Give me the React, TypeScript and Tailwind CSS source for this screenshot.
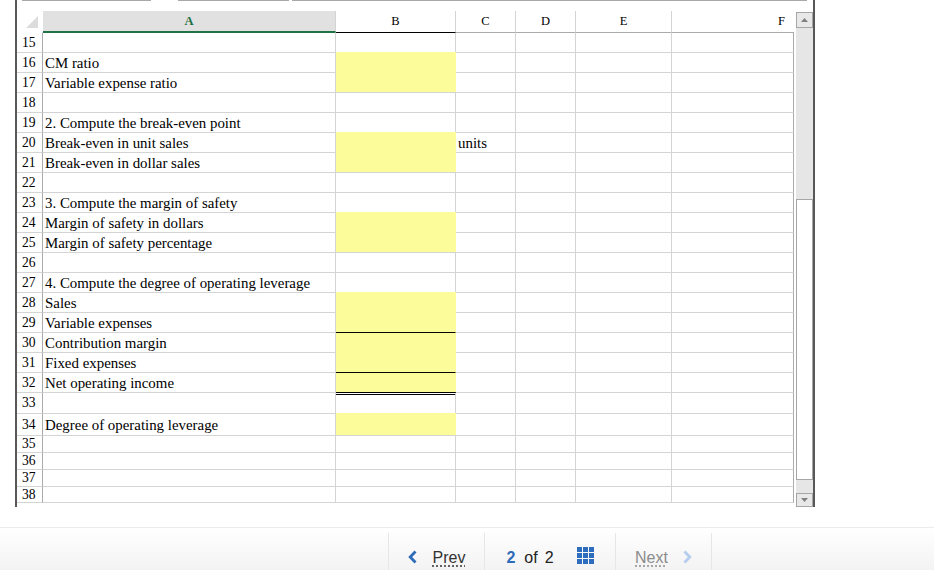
import React from 'react';

type Row = {
  n: number;
  a?: string;
  c?: string;
  y?: boolean;
  h: string;
  bTop?: 'black' | 'double';
};

const rows: Row[] = [
  { n: 15, h: 'h-[20px]', bTop: 'black' },
  { n: 16, a: 'CM ratio', y: true, h: 'h-[20px]' },
  { n: 17, a: 'Variable expense ratio', y: true, h: 'h-[20px]' },
  { n: 18, h: 'h-[20px]' },
  { n: 19, a: '2. Compute the break-even point', h: 'h-[20px]' },
  { n: 20, a: 'Break-even in unit sales', y: true, c: 'units', h: 'h-[20px]' },
  { n: 21, a: 'Break-even in dollar sales', y: true, h: 'h-[20px]' },
  { n: 22, h: 'h-[20px]' },
  { n: 23, a: '3. Compute the margin of safety', h: 'h-[20px]' },
  { n: 24, a: 'Margin of safety in dollars', y: true, h: 'h-[20px]' },
  { n: 25, a: 'Margin of safety percentage', y: true, h: 'h-[20px]' },
  { n: 26, h: 'h-[20px]' },
  { n: 27, a: '4. Compute the degree of operating leverage', h: 'h-[20px]' },
  { n: 28, a: 'Sales', y: true, h: 'h-[20px]' },
  { n: 29, a: 'Variable expenses', y: true, h: 'h-[20px]' },
  { n: 30, a: 'Contribution margin', y: true, h: 'h-[20px]', bTop: 'black' },
  { n: 31, a: 'Fixed expenses', y: true, h: 'h-[20px]' },
  { n: 32, a: 'Net operating income', y: true, h: 'h-[20px]', bTop: 'black' },
  { n: 33, h: 'h-[21px]', bTop: 'double' },
  { n: 34, a: 'Degree of operating leverage', y: true, h: 'h-[22px]' },
  { n: 35, h: 'h-[17px]' },
  { n: 36, h: 'h-[17px]' },
  { n: 37, h: 'h-[17px]' },
  { n: 38, h: 'h-[17px]' },
];

function bClass(r: Row): string {
  let top = 'border-t border-t-[#d4d4d4]';
  if (r.bTop === 'black') top = 'border-t border-t-black';
  else if (r.bTop === 'double') top = 'border-t-[3px] border-double border-t-black';
  else if (r.y) top = 'border-t border-t-[#fcfc9a]';
  const right = r.y ? 'border-r border-r-[#fcfc9a] bg-[#fcfc9a]' : 'border-r border-r-[#d4d4d4]';
  return `${top} ${right}`;
}

function SheetRow({ r }: { r: Row }) {
  const first = r.n === 15;
  const last = r.n === 38;
  const gridTop = first ? 'border-t border-t-[#ababab]' : 'border-t border-t-[#d4d4d4]';
  const bottom = last ? 'border-b border-b-[#d4d4d4]' : '';
  return (
    <div className={`flex ${r.h} box-content`}>
      <div
        className={`w-[26px] shrink-0 border-r border-r-[#ababab] ${first ? 'border-t border-t-white' : 'border-t border-t-[#d4d4d4]'} ${bottom} pl-[5px] flex items-center text-[13.6px] leading-none text-black`}
      >
        {r.n}
      </div>
      <div
        className={`w-[293px] shrink-0 border-r border-r-[#d4d4d4] ${first ? 'border-t border-t-[#217346]' : 'border-t border-t-[#d4d4d4]'} ${bottom} pl-[2px] pt-[2px] flex items-center text-[14.9px] leading-none whitespace-nowrap text-black`}
      >
        {r.a}
      </div>
      <div className={`w-[120px] shrink-0 ${bClass(r)} ${bottom}`} />
      <div
        className={`w-[60px] shrink-0 border-r border-r-[#d4d4d4] ${gridTop} ${bottom} pl-[2px] pt-[2px] flex items-center text-[14.9px] leading-none whitespace-nowrap text-black`}
      >
        {r.c}
      </div>
      <div className={`w-[60px] shrink-0 border-r border-r-[#d4d4d4] ${gridTop} ${bottom}`} />
      <div className={`w-[96px] shrink-0 border-r border-r-[#d4d4d4] ${gridTop} ${bottom}`} />
      <div className={`w-[122px] shrink-0 border-r border-r-[#ababab] ${gridTop} ${bottom}`} />
    </div>
  );
}

function Chevron({ dir, color }: { dir: 'l' | 'r'; color: string }) {
  return (
    <svg width="9" height="14" viewBox="0 0 9 14" className="shrink-0">
      <polyline
        points={dir === 'l' ? '7.5,1.5 2.2,7 7.5,12.5' : '1.5,1.5 6.8,7 1.5,12.5'}
        fill="none"
        stroke={color}
        strokeWidth="2.8"
      />
    </svg>
  );
}

function GridIcon() {
  return (
    <div className="grid grid-cols-3 gap-[1px] w-[17px] h-[17px] shrink-0">
      {Array.from({ length: 9 }).map((_, i) => (
        <div key={i} className="w-[5px] h-[5px] bg-[#2e6dbd]" />
      ))}
    </div>
  );
}

export default function App() {
  return (
    <div className="w-[934px] h-[570px] bg-white overflow-hidden font-['Liberation_Serif','Times_New_Roman',serif]">
      {/* main spreadsheet area */}
      <div className="flex h-[507px]">
        <div className="w-[15px] shrink-0" />
        <div className="w-[2px] shrink-0 bg-[#585858]" />
        <div className="flex flex-col w-[796px] shrink-0">
          {/* tab edges */}
          <div className="flex h-[1px] pl-[5px]">
            <div className="w-[129px] bg-[#a8a8a8]" />
            <div className="w-[27px]" />
            <div className="w-[111px] bg-[#a8a8a8]" />
            <div className="w-[3px]" />
            <div className="w-[515px] bg-[#a8a8a8]" />
          </div>
          <div className="flex flex-1">
            {/* grid */}
            <div className="w-[777px] shrink-0 pt-[10px] flex flex-col">
              <div className="flex h-[21px]">
                <div className="w-[26px] shrink-0 flex items-end justify-end pr-[5px] pb-[4px]">
                  <svg width="12" height="12" viewBox="0 0 12 12">
                    <polygon points="12,0 12,12 0,12" fill="#dcdcdc" />
                  </svg>
                </div>
                <div className="w-[293px] shrink-0 bg-[#e1e1e1] border-r border-r-[#d4d4d4] border-b border-b-[#217346] flex items-center justify-center text-[12.5px] font-bold text-[#1d7044]">
                  A
                </div>
                <div className="w-[120px] shrink-0 border-r border-r-[#d4d4d4] flex items-center justify-center text-[12.5px] text-black">
                  B
                </div>
                <div className="w-[60px] shrink-0 border-r border-r-[#d4d4d4] flex items-center justify-center text-[12.5px] text-black">
                  C
                </div>
                <div className="w-[60px] shrink-0 border-r border-r-[#d4d4d4] flex items-center justify-center text-[12.5px] text-black">
                  D
                </div>
                <div className="w-[96px] shrink-0 border-r border-r-[#d4d4d4] flex items-center justify-center text-[12.5px] text-black">
                  E
                </div>
                <div className="w-[122px] shrink-0 flex items-center justify-end pr-[9px] text-[12.5px] text-black">
                  F
                </div>
              </div>
              {rows.map((r) => (
                <SheetRow key={r.n} r={r} />
              ))}
            </div>
            <div className="w-[2px] shrink-0" />
            {/* scrollbar */}
            <div className="w-[17px] shrink-0 mt-[11px] flex flex-col">
              <div className="h-[16px] border border-[#a6a6a6] bg-[#e8e8e8] flex items-center justify-center">
                <svg width="7" height="4" viewBox="0 0 7 4">
                  <polygon points="3.5,0 7,4 0,4" fill="#808080" />
                </svg>
              </div>
              <div className="flex-1 bg-[#e6e6e6] flex flex-col">
                <div className="h-[171px]" />
                <div className="h-[281px] bg-white border border-[#a6a6a6]" />
              </div>
              <div className="h-[14px] border border-[#a6a6a6] bg-[#e8e8e8] flex items-center justify-center">
                <svg width="7" height="4" viewBox="0 0 7 4">
                  <polygon points="0,0 7,0 3.5,4" fill="#808080" />
                </svg>
              </div>
            </div>
          </div>
        </div>
        <div className="w-[2px] shrink-0 bg-[#585858]" />
      </div>

      {/* footer navigation */}
      <div className="h-[20px]" />
      <div className="h-[43px] border-t border-t-[#ececec] bg-gradient-to-b from-white to-[#f3f3f3] font-['Liberation_Sans',Arial,sans-serif]">
        <div className="flex ml-[388px] mt-[5px] h-[38px] text-[16px] leading-[20px]">
          <div className="w-[96px] border-l border-l-[#e6e6e6] pt-[15px] flex justify-center gap-[16px]">
            <div className="pt-[2px]">
              <Chevron dir="l" color="#2e6bb8" />
            </div>
            <span className="text-[#333] underline decoration-dotted underline-offset-[3px]">Prev</span>
          </div>
          <div className="w-[131px] border-l border-l-[#e6e6e6] pt-[15px] flex justify-center">
            <span className="font-bold text-[#2e6bb8]">2</span>
            <span className="ml-[9px] text-[#222]">of</span>
            <span className="ml-[7px] text-[#222]">2</span>
            <div className="ml-[23px] -mt-[1px]">
              <GridIcon />
            </div>
          </div>
          <div className="w-[97px] border-l border-r border-[#e6e6e6] pt-[15px] flex justify-center gap-[15px]">
            <span className="text-[#8c8c8c] underline decoration-dotted underline-offset-[3px]">Next</span>
            <div className="pt-[2px]">
              <Chevron dir="r" color="#b5cdee" />
            </div>
          </div>
        </div>
      </div>
    </div>
  );
}
